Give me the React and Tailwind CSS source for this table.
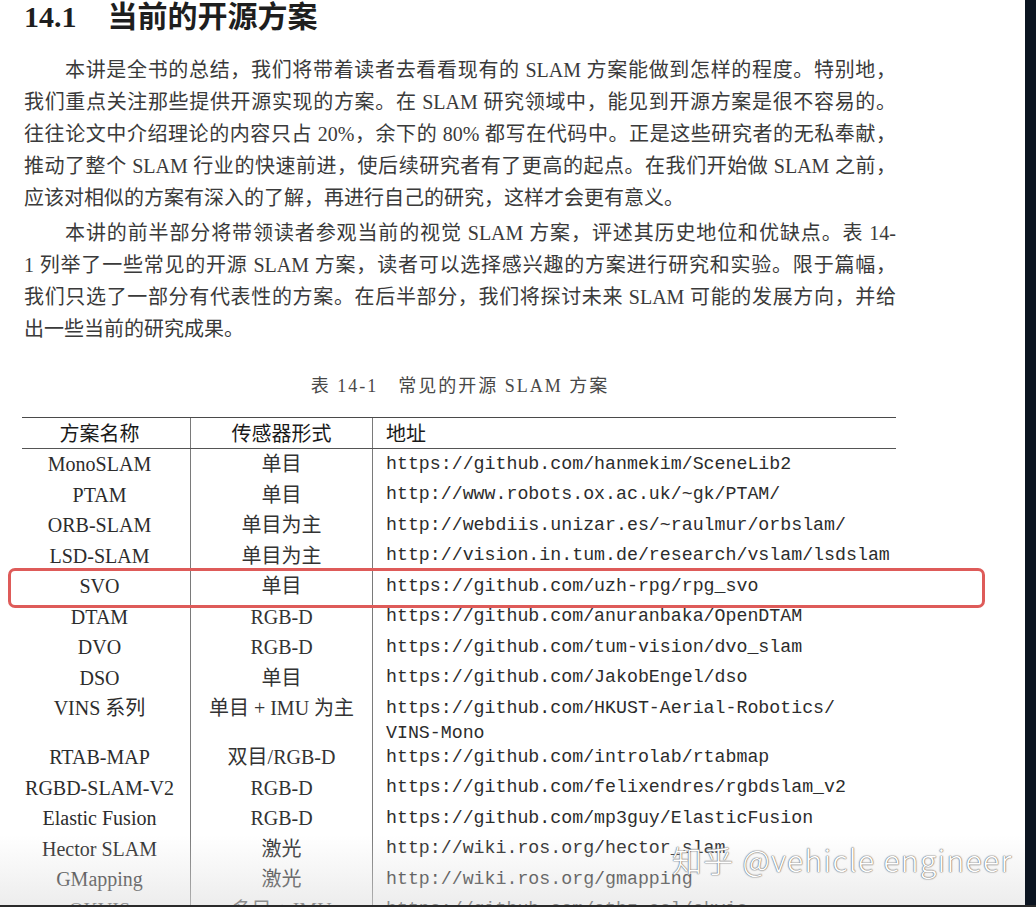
import React from "react";

const serif = { fontFamily: '"Liberation Serif", "Noto Sans CJK SC", serif' };
const mono = { fontFamily: '"Liberation Mono", "Noto Sans CJK SC", monospace' };
const hei = { fontFamily: '"Noto Sans CJK SC", "Noto Sans", sans-serif' };

const rows = [
  ["MonoSLAM", "单目", "https://github.com/hanmekim/SceneLib2"],
  ["PTAM", "单目", "http://www.robots.ox.ac.uk/~gk/PTAM/"],
  ["ORB-SLAM", "单目为主", "http://webdiis.unizar.es/~raulmur/orbslam/"],
  ["LSD-SLAM", "单目为主", "http://vision.in.tum.de/research/vslam/lsdslam"],
  ["SVO", "单目", "https://github.com/uzh-rpg/rpg_svo"],
  ["DTAM", "RGB-D", "https://github.com/anuranbaka/OpenDTAM"],
  ["DVO", "RGB-D", "https://github.com/tum-vision/dvo_slam"],
  ["DSO", "单目", "https://github.com/JakobEngel/dso"],
  ["VINS 系列", "单目 + IMU 为主", "https://github.com/HKUST-Aerial-Robotics/", "VINS-Mono"],
  ["RTAB-MAP", "双目/RGB-D", "https://github.com/introlab/rtabmap"],
  ["RGBD-SLAM-V2", "RGB-D", "https://github.com/felixendres/rgbdslam_v2"],
  ["Elastic Fusion", "RGB-D", "https://github.com/mp3guy/ElasticFusion"],
  ["Hector SLAM", "激光", "http://wiki.ros.org/hector_slam"],
  ["GMapping", "激光", "http://wiki.ros.org/gmapping"],
  ["OKVIS", "多目 + IMU", "https://github.com/ethz-asl/okvis"],
];

function JLine({ children, indent, last }) {
  return (
    <div
      className={
        (last ? "text-left" : "text-justify [text-align-last:justify]") +
        (indent ? " pl-[41px]" : "")
      }
    >
      {children}
    </div>
  );
}

function Row({ r }) {
  const two = r.length > 3;
  return (
    <div className={"grid grid-cols-[169px_182px_1fr] " + (two ? "h-[49px]" : "h-[30.5px]")}>
      <div className="border-r border-[#7a7a7a] pr-[13px]">
        <div className="h-[30.5px] flex items-center justify-center text-[20px] text-[#2c2c2c] whitespace-nowrap" style={serif}>
          {r[0]}
        </div>
      </div>
      <div className="border-r border-[#7a7a7a]">
        <div className="h-[30.5px] flex items-center justify-center text-[20px] text-[#333] whitespace-nowrap" style={serif}>
          {r[1]}
        </div>
      </div>
      <div className="pl-[13px] text-[18.25px] text-[#2c2c2c]" style={mono}>
        <div className="h-[30.5px] flex items-center whitespace-nowrap">{r[2]}</div>
        {two && <div className="h-[18.5px] leading-[18.5px] whitespace-nowrap">{r[3]}</div>}
      </div>
    </div>
  );
}

export default function App() {
  return (
    <div className="w-[1036px] h-[907px] flex flex-col overflow-hidden bg-white">
      <div className="flex h-[905px]">
        <div className="relative flex-1 bg-white overflow-hidden">
          <div className="pl-[24px] w-[896px]">
            <h1 className="pt-[1px] text-[30px] leading-[32px] font-bold text-[#1e1e1e] whitespace-nowrap" style={serif}>
              14.1<span className="ml-[31px]">当前的开源方案</span>
            </h1>

            <div className="mt-[21px] text-[20px] leading-[32px] text-[#3a3a3a]" style={serif}>
              <JLine indent>本讲是全书的总结，我们将带着读者去看看现有的 SLAM 方案能做到怎样的程度。特别地，</JLine>
              <JLine>我们重点关注那些提供开源实现的方案。在 SLAM 研究领域中，能见到开源方案是很不容易的。</JLine>
              <JLine>往往论文中介绍理论的内容只占 20%，余下的 80% 都写在代码中。正是这些研究者的无私奉献，</JLine>
              <JLine>推动了整个 SLAM 行业的快速前进，使后续研究者有了更高的起点。在我们开始做 SLAM 之前，</JLine>
              <JLine last>应该对相似的方案有深入的了解，再进行自己的研究，这样才会更有意义。</JLine>
            </div>
            <div className="mt-[3px] text-[20px] leading-[32px] text-[#3a3a3a]" style={serif}>
              <JLine indent>本讲的前半部分将带领读者参观当前的视觉 SLAM 方案，评述其历史地位和优缺点。表 14-</JLine>
              <JLine>1 列举了一些常见的开源 SLAM 方案，读者可以选择感兴趣的方案进行研究和实验。限于篇幅，</JLine>
              <JLine>我们只选了一部分有代表性的方案。在后半部分，我们将探讨未来 SLAM 可能的发展方向，并给</JLine>
              <JLine last>出一些当前的研究成果。</JLine>
            </div>

            <div className="mt-[29px] text-center text-[18px] leading-[24px] tracking-[2px] text-[#484848]" style={serif}>
              表 14-1　常见的开源 SLAM 方案
            </div>

            <div className="mt-[19px] -ml-[2px] w-[874px] border-t-[1.5px] border-[#4a4a4a]">
              <div className="grid grid-cols-[169px_182px_1fr] h-[31px] border-b border-[#555]">
                <div className="border-r border-[#7a7a7a] pr-[13px] flex items-center justify-center text-[20px] font-normal text-[#1a1a1a]" style={hei}>
                  方案名称
                </div>
                <div className="border-r border-[#7a7a7a] flex items-center justify-center text-[20px] font-normal text-[#1a1a1a]" style={hei}>
                  传感器形式
                </div>
                <div className="pl-[13px] flex items-center text-[20px] font-normal text-[#1a1a1a]" style={hei}>
                  地址
                </div>
              </div>
              {rows.map((r, i) => (
                <Row key={i} r={r} />
              ))}
            </div>
          </div>

          <div className="absolute left-[8px] top-[568px] w-[977px] h-[40px] border-[3px] border-[#de5b59] rounded-[7px] pointer-events-none" />

          <div className="absolute left-0 right-0 bottom-0 h-[70px] pointer-events-none bg-linear-to-b from-[rgba(230,230,230,0)] to-[rgba(222,222,222,0.55)]" />

          <div
            className="absolute left-[672px] top-[839px] text-[30px] leading-[40px] font-light tracking-[1.3px] text-white whitespace-nowrap pointer-events-none [text-shadow:0_0_1px_#6f6f6f,0_0_1px_#6f6f6f,0_0_2px_#9a9a9a]"
            style={hei}
          >
            知乎 @vehicle engineer
          </div>
        </div>
        <div className="w-[11px] bg-[#0c1521]" />
      </div>
      <div className="h-[2px] bg-[#2a2a2a]" />
    </div>
  );
}
